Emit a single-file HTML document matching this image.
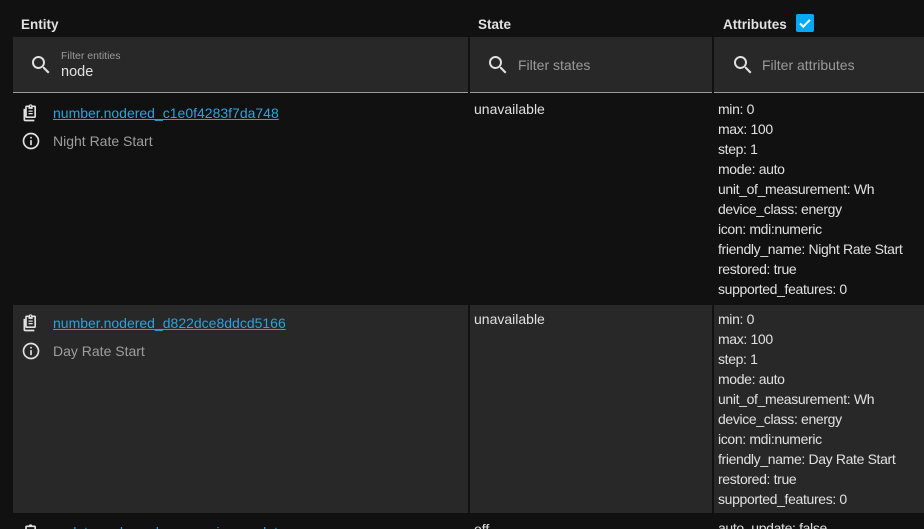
<!DOCTYPE html>
<html style="height:529px;overflow:hidden"><head><style>
*{margin:0;padding:0;box-sizing:border-box}
body{width:924px;height:529px;background:#111;overflow:hidden;font-family:"Liberation Sans",sans-serif;color:#e1e1e1;position:relative;font-size:13.5px}
.a{position:absolute}
.h{font-weight:bold;font-size:13.5px;color:#e1e1e1;top:17px}
.f{background:#282828;top:37px;height:56px;border-bottom:1px solid #9a9a9a}
.ph{color:#9a9a9a;font-size:14px}
.bg{background:#282828}
.lines div{height:20px;line-height:20px;white-space:nowrap;letter-spacing:-0.35px;font-size:14px}
a{color:#2aa3df;text-decoration:underline;font-size:14px}
.grey{color:#9e9e9e;font-size:14px}
svg{position:absolute}
</style></head><body>
<div class="a h" style="left:21px">Entity</div>
<div class="a h" style="left:478px">State</div>
<div class="a h" style="left:723px">Attributes</div>
<div class="a" style="left:796px;top:14px;width:18px;height:18px;background:#03a9f4;border-radius:2px">
<svg width="18" height="18" viewBox="0 0 18 18" style="left:0;top:0"><path d="M4 9.5l3.2 3.2L14 5.8" stroke="#fff" stroke-width="2" fill="none"/></svg></div>

<div class="a f" style="left:13px;width:455px"></div>
<div class="a f" style="left:470px;width:242px"></div>
<div class="a f" style="left:714px;width:210px"></div>

<svg width="24" height="24" viewBox="0 0 24 24" style="left:29px;top:53px"><path fill="#e1e1e1" d="M9.5 3A6.5 6.5 0 0 1 16 9.5c0 1.6-.6 3.1-1.6 4.2l.3.3h.8l5 5-1.5 1.5-5-5v-.8l-.3-.3A6.5 6.5 0 0 1 9.5 16 6.5 6.5 0 0 1 3 9.5 6.5 6.5 0 0 1 9.5 3m0 2C7 5 5 7 5 9.5S7 14 9.5 14 14 12 14 9.5 12 5 9.5 5z"/></svg>
<div class="a" style="left:61px;top:50px;font-size:10.5px;color:#9a9a9a">Filter entities</div>
<div class="a" style="left:61px;top:64px;font-size:14.5px;color:#e1e1e1">node</div>

<svg width="24" height="24" viewBox="0 0 24 24" style="left:486px;top:53px"><path fill="#e1e1e1" d="M9.5 3A6.5 6.5 0 0 1 16 9.5c0 1.6-.6 3.1-1.6 4.2l.3.3h.8l5 5-1.5 1.5-5-5v-.8l-.3-.3A6.5 6.5 0 0 1 9.5 16 6.5 6.5 0 0 1 3 9.5 6.5 6.5 0 0 1 9.5 3m0 2C7 5 5 7 5 9.5S7 14 9.5 14 14 12 14 9.5 12 5 9.5 5z"/></svg>
<div class="a ph" style="left:518px;top:57px">Filter states</div>
<svg width="24" height="24" viewBox="0 0 24 24" style="left:731px;top:53px"><path fill="#e1e1e1" d="M9.5 3A6.5 6.5 0 0 1 16 9.5c0 1.6-.6 3.1-1.6 4.2l.3.3h.8l5 5-1.5 1.5-5-5v-.8l-.3-.3A6.5 6.5 0 0 1 9.5 16 6.5 6.5 0 0 1 3 9.5 6.5 6.5 0 0 1 9.5 3m0 2C7 5 5 7 5 9.5S7 14 9.5 14 14 12 14 9.5 12 5 9.5 5z"/></svg>
<div class="a ph" style="left:762px;top:57px">Filter attributes</div>

<div class="a bg" style="left:13px;top:305px;width:455px;height:208px"></div>
<div class="a bg" style="left:470px;top:305px;width:242px;height:208px"></div>
<div class="a bg" style="left:714px;top:305px;width:210px;height:208px"></div>

<svg width="20" height="20" viewBox="0 0 24 24" style="left:21px;top:103px"><path fill="#e1e1e1" d="M16 3h-2.2A2.5 2.5 0 0 0 9.2 3H7a2 2 0 0 0-2 2v11a2 2 0 0 0 2 2h9a2 2 0 0 0 2-2V5a2 2 0 0 0-2-2zm-4.5 0a.8.8 0 1 1 0 1.6.8.8 0 0 1 0-1.6zM16 16H7V5h2v2h5V5h2v11zM3 7v13a2 2 0 0 0 2 2h11v-2H5V7H3zm6 2h5v1.5H9zm0 3h5v1.5H9z"/></svg>
<a class="a" style="left:53px;top:105px">number.nodered_c1e0f4283f7da748</a>
<svg width="20" height="20" viewBox="0 0 24 24" style="left:21px;top:131px"><path fill="#e1e1e1" d="M11 9h2V7h-2m1 13c-4.4 0-8-3.6-8-8s3.6-8 8-8 8 3.6 8 8-3.6 8-8 8m0-18A10 10 0 0 0 2 12a10 10 0 0 0 10 10 10 10 0 0 0 10-10A10 10 0 0 0 12 2m-1 15h2v-6h-2v6z"/></svg>
<div class="a grey" style="left:53px;top:133px">Night Rate Start</div>
<div class="a" style="left:474px;top:101px;font-size:14px">unavailable</div>
<div class="a lines" style="left:718px;top:99px">
<div>min: 0</div><div>max: 100</div><div>step: 1</div><div>mode: auto</div><div>unit_of_measurement: Wh</div><div>device_class: energy</div><div>icon: mdi:numeric</div><div>friendly_name: Night Rate Start</div><div>restored: true</div><div>supported_features: 0</div></div>

<svg width="20" height="20" viewBox="0 0 24 24" style="left:21px;top:313px"><path fill="#e1e1e1" d="M16 3h-2.2A2.5 2.5 0 0 0 9.2 3H7a2 2 0 0 0-2 2v11a2 2 0 0 0 2 2h9a2 2 0 0 0 2-2V5a2 2 0 0 0-2-2zm-4.5 0a.8.8 0 1 1 0 1.6.8.8 0 0 1 0-1.6zM16 16H7V5h2v2h5V5h2v11zM3 7v13a2 2 0 0 0 2 2h11v-2H5V7H3zm6 2h5v1.5H9zm0 3h5v1.5H9z"/></svg>
<a class="a" style="left:53px;top:315px">number.nodered_d822dce8ddcd5166</a>
<svg width="20" height="20" viewBox="0 0 24 24" style="left:21px;top:341px"><path fill="#e1e1e1" d="M11 9h2V7h-2m1 13c-4.4 0-8-3.6-8-8s3.6-8 8-8 8 3.6 8 8-3.6 8-8 8m0-18A10 10 0 0 0 2 12a10 10 0 0 0 10 10 10 10 0 0 0 10-10A10 10 0 0 0 12 2m-1 15h2v-6h-2v6z"/></svg>
<div class="a grey" style="left:53px;top:343px">Day Rate Start</div>
<div class="a" style="left:474px;top:311px;font-size:14px">unavailable</div>
<div class="a lines" style="left:718px;top:309px">
<div>min: 0</div><div>max: 100</div><div>step: 1</div><div>mode: auto</div><div>unit_of_measurement: Wh</div><div>device_class: energy</div><div>icon: mdi:numeric</div><div>friendly_name: Day Rate Start</div><div>restored: true</div><div>supported_features: 0</div></div>

<svg width="20" height="20" viewBox="0 0 24 24" style="left:21px;top:523px"><path fill="#e1e1e1" d="M16 3h-2.2A2.5 2.5 0 0 0 9.2 3H7a2 2 0 0 0-2 2v11a2 2 0 0 0 2 2h9a2 2 0 0 0 2-2V5a2 2 0 0 0-2-2zM16 16H7V5h9z"/></svg>
<a class="a" style="left:53px;top:524px">update.node_red_companion_update</a>
<div class="a" style="left:474px;top:521px;font-size:14px">off</div>
<div class="a" style="left:718px;top:520px;font-size:14px;letter-spacing:-0.35px">auto_update: false</div>
</body></html>
